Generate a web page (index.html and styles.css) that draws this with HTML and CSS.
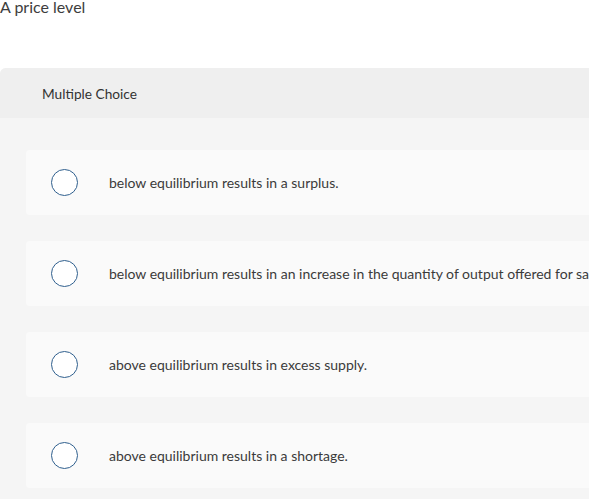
FILE: index.html
```html
<!DOCTYPE html>
<html>
<head>
<meta charset="utf-8">
<link rel="stylesheet" href="styles.css">
</head>
<body>
<p class="prompt">A price level</p>
<div class="question">
  <div class="q-header">Multiple Choice</div>
  <div class="q-body">
    <label class="choice"><span class="radio"></span><span class="choice-text">below equilibrium results in a surplus.</span></label>
    <label class="choice"><span class="radio"></span><span class="choice-text">below equilibrium results in an increase in the quantity of output offered for sale.</span></label>
    <label class="choice"><span class="radio"></span><span class="choice-text">above equilibrium results in excess supply.</span></label>
    <label class="choice"><span class="radio"></span><span class="choice-text">above equilibrium results in a shortage.</span></label>
  </div>
</div>
</body>
</html>
```
FILE: styles.css
```css
html, body {
  margin: 0;
  padding: 0;
  overflow: hidden;
  background: #ffffff;
  font-family: Lato, "Open Sans", sans-serif;
  color: #333333;
}
.prompt {
  margin: 0;
  font-size: 16px;
  line-height: 14px;
  height: 68px;
  color: #3d3d3d;
}
.question {
  width: 640px;
  background: #f5f5f5;
  border-radius: 6px 0 0 0;
  padding-bottom: 40px;
}
.q-header {
  height: 50px;
  display: flex;
  align-items: center;
  padding-left: 42px;
  background: #efefef;
  border-radius: 6px 0 0 0;
  font-size: 13.7px;
  color: #333;
}
.q-body {
  padding: 32px 0 0 26px;
  display: flex;
  flex-direction: column;
  gap: 26px;
}
.choice {
  height: 65px;
  background: #fafafa;
  border-radius: 4px;
  display: flex;
  align-items: center;
  padding-left: 25px;
  white-space: nowrap;
}
.radio {
  width: 27px;
  height: 27px;
  box-sizing: border-box;
  border: 1.5px solid #2f5f8e;
  border-radius: 50%;
  background: #fff;
  flex: none;
}
.choice-text {
  margin-left: 31px;
  font-size: 14px;
  color: #3a3a3a;
}
```
